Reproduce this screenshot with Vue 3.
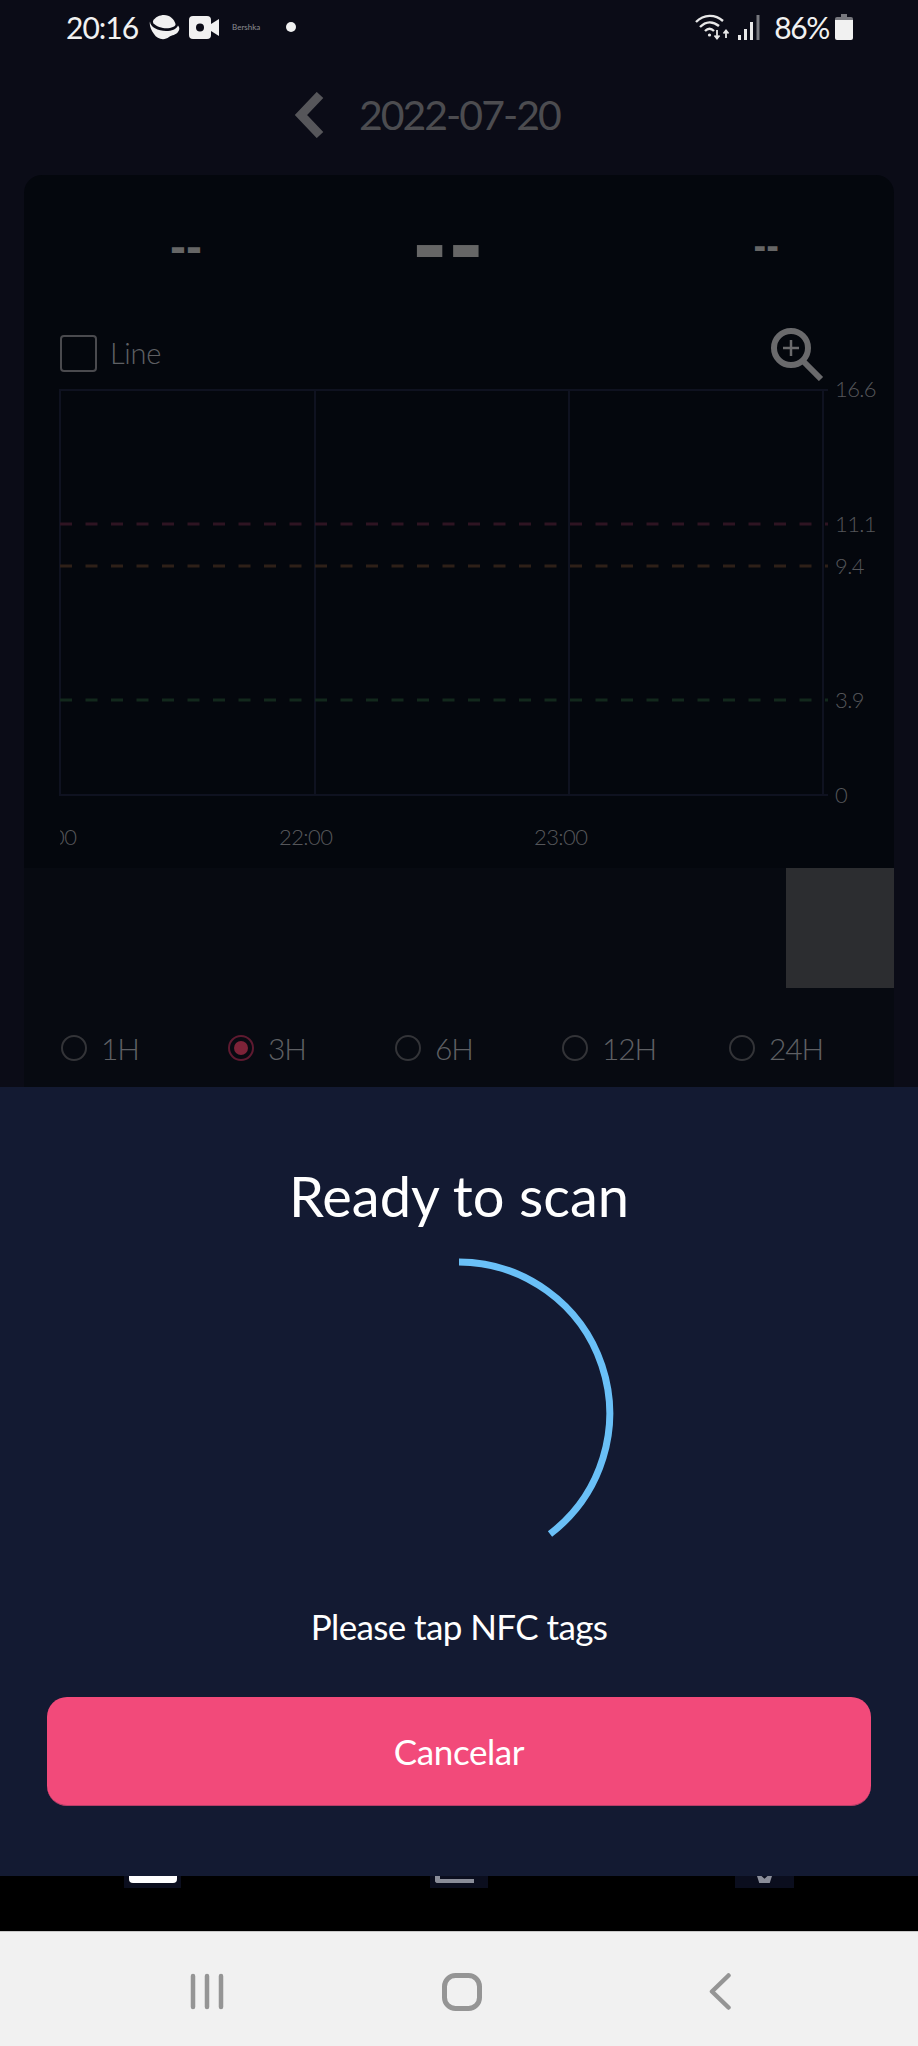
<script setup>
const ranges = [
  { label: '1H', on: false },
  { label: '3H', on: true },
  { label: '6H', on: false },
  { label: '12H', on: false },
  { label: '24H', on: false },
]

// chart is drawn in the svg's own coordinates
const limits = [
  { y: 144, color: '#2e1422', label: '11.1' },
  { y: 186, color: '#2e2018', label: '9.4' },
  { y: 320, color: '#12281c', label: '3.9' },
]
const yLabels = [
  { y: 17, label: '16.6' },
  { y: 152, label: '11.1' },
  { y: 194, label: '9.4' },
  { y: 328, label: '3.9' },
  { y: 423, label: '0' },
]
const xLabels = [
  { x: -1, label: '21:00' },
  { x: 255, label: '22:00' },
  { x: 510, label: '23:00' },
]
</script>

<template>
  <div class="screen">
    <div class="app">
      <div class="status">
        <div class="status-left">
          <span class="time">20:16</span>
          <svg class="planet" width="31" height="25" viewBox="0 0 31 25">
            <path d="M4 6 C6 2 11 0 15 0 C21 0 25 4 26.500 9 C27 12 20 14 14 13 C9 12 3 9 4 6z" fill="#f1f1f1" />
            <path d="M1 6.500 C1 12 9 16 17 16 C23 16 27 14.500 29 10.500 C30.500 12 31 14.500 29 17 C27 20 23 20 20 22 C15 26 8 24 5 19 C2 15 0 10 1 6.500z" fill="#f1f1f1" />
          </svg>
          <svg class="video" width="30" height="23" viewBox="0 0 30 23">
            <rect x="0" y="0" width="22" height="23" rx="4" fill="#f1f1f1" />
            <path d="M22 8 L30 3 V20 L22 15z" fill="#f1f1f1" />
            <circle cx="11" cy="11.5" r="4" fill="#0b0c17" />
          </svg>
          <span class="shop">Bershka</span>
          <span class="dot"></span>
        </div>
        <div class="status-right">
          <svg width="36" height="26" viewBox="0 0 36 26" fill="none" stroke="#e8e8e8" stroke-width="2.4">
            <path d="M1 8 C9 0 20 0 28 7" />
            <path d="M5 13 C11 7 18 7 24 12" />
            <path d="M10 17 C13 14 16 14 19 17" />
            <circle cx="14.5" cy="21" r="1.6" fill="#e8e8e8" stroke="none" />
            <path d="M22 16 V24 M19.5 21.5 L22 24.5 L24.5 21.5 M31 24 V17 M28.500 19.500 L31 16.500 L33.500 19.500" stroke-width="1.800" />
          </svg>
          <svg class="signal" width="22" height="25" viewBox="0 0 22 25">
            <rect x="0" y="20" width="3" height="5" fill="#e8e8e8" />
            <rect x="6" y="14" width="3" height="11" fill="#e8e8e8" />
            <rect x="12" y="7" width="3" height="18" fill="#e8e8e8" />
            <rect x="18.500" y="0" width="3" height="25" fill="#77787e" />
          </svg>
          <span class="pct">86%</span>
          <svg class="battery" width="18" height="26" viewBox="0 0 18 26">
            <path d="M6 0 H12 V3 H16 Q18 3 18 5 V8 H0 V5 Q0 3 2 3 H6z" fill="#77787e" />
            <path d="M0 6 H18 V24 Q18 26 16 26 H2 Q0 26 0 24z" fill="#f1f1f1" />
          </svg>
        </div>
      </div>

      <div class="title-row">
        <svg width="30" height="46" viewBox="0 0 30 46">
          <path d="M26 3 L7 23 L26 43" fill="none" stroke="#56565a" stroke-width="9" />
        </svg>
        <span class="date">2022-07-20</span>
      </div>

      <div class="card">
        <div class="stats">
          <span class="stat stat-a">--</span>
          <span class="stat stat-b">--</span>
          <span class="stat stat-c">--</span>
        </div>

        <div class="toolbar">
          <div class="check">
            <span class="box"></span>
            <span class="check-label">Line</span>
          </div>
          <svg class="zoom" width="54" height="54" viewBox="0 0 54 54" fill="none" stroke="#6a6a6c">
            <circle cx="21" cy="21" r="17" stroke-width="6" />
            <path d="M33 34 L51 52" stroke-width="6" />
            <path d="M21 13 V29 M13 21 H29" stroke-width="2.500" />
          </svg>
        </div>

        <svg class="chart" width="870" height="488" viewBox="0 0 870 488">
          <defs>
            <clipPath id="plot-clip"><rect x="36" y="440" width="800" height="40" /></clipPath>
          </defs>
          <g stroke="#0f1220" stroke-width="2" fill="none">
            <rect x="36" y="10" width="763" height="405" />
            <path d="M291 10 V415 M545 10 V415 M799 10 H804 M799 415 H804" />
          </g>
          <path
            v-for="l in limits"
            :key="l.label"
            :d="`M36 ${l.y} H804`"
            :stroke="l.color"
            stroke-width="3"
            stroke-dasharray="12 13.5"
            fill="none"
          />
          <text v-for="l in yLabels" :key="l.label" class="axis" x="811" :y="l.y">{{ l.label }}</text>
          <g clip-path="url(#plot-clip)">
            <text v-for="l in xLabels" :key="l.x" class="axis" :x="l.x" y="465">{{ l.label }}</text>
          </g>
        </svg>

        <div class="overview">
          <div class="thumb"></div>
        </div>

        <div class="ranges">
          <div v-for="r in ranges" :key="r.label" class="range" :class="{ on: r.on }">
            <span class="radio"><i v-if="r.on"></i></span>
            <span class="range-label">{{ r.label }}</span>
          </div>
        </div>
      </div>
    </div>

    <div class="sheet">
      <h1 class="sheet-title">Ready to scan</h1>
      <svg class="arc" width="170" height="290" viewBox="0 0 170 290">
        <path d="M0 4 A151.500 151.500 0 0 1 91 276" fill="none" stroke="#6ac0f7" stroke-width="7" />
      </svg>
      <p class="hint">Please tap NFC tags</p>
      <button type="button" class="cancel">Cancelar</button>
    </div>

    <div class="under">
      <div class="stub stub-a"><span></span></div>
      <div class="stub stub-b"><span></span></div>
      <div class="stub stub-c"><span></span></div>
    </div>

    <div class="nav">
      <svg class="nav-recent" width="34" height="37" viewBox="0 0 34 37" stroke="#959595" stroke-width="4.500" stroke-linecap="round">
        <path d="M3 3 V34 M17 3 V34 M31 3 V34" />
      </svg>
      <svg class="nav-home" width="40" height="38" viewBox="0 0 40 38">
        <rect x="2.500" y="2.500" width="35" height="33" rx="11" fill="none" stroke="#959595" stroke-width="5" />
      </svg>
      <svg class="nav-back" width="22" height="37" viewBox="0 0 22 37">
        <path d="M19.500 2.500 L3 18.500 L19.500 34.500" fill="none" stroke="#959595" stroke-width="4.500" stroke-linecap="round" stroke-linejoin="round" />
      </svg>
    </div>
  </div>
</template>

<style>
body {
  background: #000;
}
</style>

<style scoped>
.screen {
  width: 918px;
  height: 2046px;
  display: flex;
  flex-direction: column;
  overflow: hidden;
  font-family: Lato, "Liberation Sans", sans-serif;
  background: #000;
}

.app {
  height: 1087px;
  flex-shrink: 0;
  background: #0b0c17;
  overflow: hidden;
}

.status {
  height: 54px;
  padding: 14px 65px 0 66px;
  box-sizing: border-box;
  display: flex;
  justify-content: space-between;
  color: #f1f1f1;
}
.status-left,
.status-right {
  display: flex;
  align-items: center;
  height: 26px;
}
.time {
  font-size: 30px;
  letter-spacing: -1px;
  margin-right: 11px;
}
.video {
  margin-left: 9px;
}
.shop {
  font-size: 8px;
  color: #8c8d92;
  margin-left: 13px;
  width: 54px;
}
.dot {
  width: 10px;
  height: 10px;
  border-radius: 50%;
  background: #f1f1f1;
}
.signal {
  margin-left: 7px;
}
.pct {
  font-size: 30px;
  letter-spacing: -1.4px;
  margin-left: 14px;
}
.battery {
  margin-left: 6px;
}

.title-row {
  height: 121px;
  padding: 38px 0 0 294px;
  box-sizing: border-box;
  display: flex;
  align-items: flex-start;
  color: #4c4c50;
}
.title-row svg {
  margin-right: 35px;
}
.date {
  font-size: 41px;
  line-height: 46px;
  letter-spacing: -2px;
}

.card {
  margin: 0 24px;
  height: 930px;
  border-radius: 18px 18px 0 0;
  background: #04070d;
  overflow: hidden;
}

.stats {
  height: 152px;
  display: flex;
  align-items: flex-start;
  font-family: "Liberation Sans", sans-serif;
  font-weight: 700;
  color: #666;
}
.stat {
  line-height: 1;
}
.stat-a {
  margin: 48px 0 0 146px;
  font-size: 48px;
}
.stat-b {
  margin: 17px 0 0 211px;
  font-size: 100px;
  letter-spacing: 3px;
}
.stat-c {
  margin: 52px 0 0 268px;
  font-size: 38px;
}

.toolbar {
  height: 53px;
  padding: 0 70px 0 36px;
  display: flex;
  justify-content: space-between;
}
.check {
  display: flex;
  align-items: flex-start;
  height: 49px;
  color: #5f6064;
  font-weight: 300;
}
.box {
  width: 37px;
  height: 37px;
  box-sizing: border-box;
  border: 2px solid #4a4a4e;
  border-radius: 4px;
  margin-top: 8px;
}
.check-label {
  font-size: 29px;
  line-height: 36px;
  margin-left: 13px;
  margin-top: 8px;
  letter-spacing: -0.3px;
}

.chart {
  display: block;
}
.axis {
  font-size: 22px;
  font-weight: 300;
  letter-spacing: -0.6px;
  fill: #55565a;
}

.overview {
  height: 120px;
  background: #070a11;
  display: flex;
  justify-content: flex-end;
}
.thumb {
  width: 108px;
  background: #2c2d30;
}

.ranges {
  height: 99px;
  background: #070a11;
  padding: 47px 0 0 37px;
  box-sizing: border-box;
  display: flex;
}
.range {
  width: 167px;
  display: flex;
  align-items: center;
  height: 26px;
  flex-shrink: 0;
}
.radio {
  width: 26px;
  height: 26px;
  box-sizing: border-box;
  border: 2px solid #333438;
  border-radius: 50%;
  display: flex;
  align-items: center;
  justify-content: center;
}
.range.on .radio {
  border-color: #5e1a30;
}
.radio i {
  width: 14px;
  height: 14px;
  border-radius: 50%;
  background: #7d2338;
}
.range-label {
  font-size: 30px;
  font-weight: 300;
  line-height: 26px;
  color: #5f6064;
  margin-left: 14px;
  letter-spacing: -1.2px;
}

.sheet {
  height: 789px;
  flex-shrink: 0;
  background: #131a32;
  color: #fff;
  display: flex;
  flex-direction: column;
  align-items: center;
}
.sheet-title {
  margin: 75px 0 0;
  font-size: 56px;
  font-weight: 400;
  line-height: 68px;
}
.arc {
  align-self: flex-start;
  margin: 28px 0 0 459px;
}
.hint {
  margin: 56px 0 0;
  font-size: 35px;
  line-height: 44px;
  letter-spacing: -0.6px;
}
.cancel {
  margin-top: 49px;
  width: 824px;
  height: 109px;
  border: 0;
  border-bottom: 1px solid #b83e68;
  border-radius: 20px;
  background: #f24a7a;
  color: #fff;
  font-family: inherit;
  font-size: 35px;
  letter-spacing: -0.4px;
}

.under {
  height: 56px;
  flex-shrink: 0;
  background: #000;
  display: flex;
  align-items: flex-start;
  padding-left: 124px;
  border-bottom: 1px solid #c8c8c8;
  box-sizing: border-box;
}
.stub {
  height: 12px;
  background: #0b0e1e;
  display: flex;
  justify-content: center;
}
.stub span {
  display: block;
  height: 7px;
}
.stub-a {
  width: 57px;
}
.stub-a span {
  width: 48px;
  background: #fff;
  border-radius: 0 0 4px 4px;
}
.stub-b {
  width: 58px;
  margin-left: 249px;
  justify-content: flex-start;
  padding-left: 5px;
  box-sizing: border-box;
}
.stub-b span {
  width: 39px;
  box-sizing: border-box;
  border-left: 5px solid #8a8d99;
  border-bottom: 4px solid #8a8d99;
  border-bottom-left-radius: 3px;
}
.stub-c {
  width: 59px;
  margin-left: 247px;
}
.stub-c span {
  width: 15px;
  background: #8a8d99;
  clip-path: polygon(0 0, 30% 0, 50% 40%, 70% 0, 100% 0, 85% 100%, 15% 100%);
}

.nav {
  flex: 1;
  background: #f1f1f1;
  display: flex;
  align-items: flex-start;
  padding: 41px 0 0 190px;
  box-sizing: border-box;
}
.nav-home {
  margin-left: 218px;
}
.nav-back {
  margin-left: 227px;
}
</style>
